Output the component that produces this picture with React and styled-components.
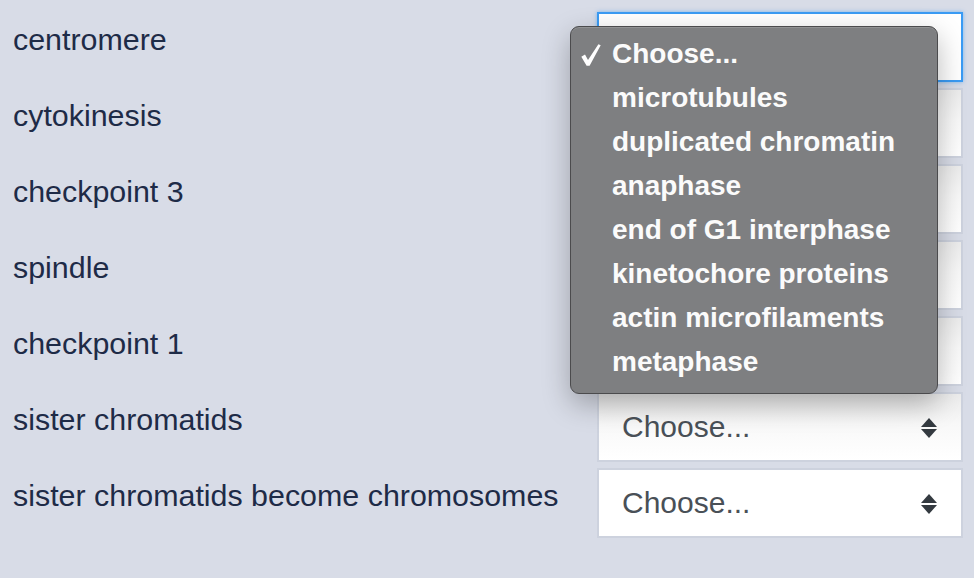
import React from 'react';
import styled, { createGlobalStyle } from 'styled-components';

const GlobalStyle = createGlobalStyle`
  html, body {
    margin: 0;
    padding: 0;
    background: #d8dce7;
  }
  body {
    font-family: 'Liberation Sans', Arial, Helvetica, sans-serif;
  }
`;

const Page = styled.div`
  width: 974px;
  height: 578px;
  overflow: hidden;
  box-sizing: border-box;
  padding: 12px 11px 0 13px;
  background: #d8dce7;
`;

const Row = styled.div`
  display: flex;
  justify-content: space-between;
  align-items: flex-start;
  height: 70px;
  margin-bottom: 6px;
`;

const Label = styled.div`
  padding-top: 10px;
  font-size: 30.4px;
  line-height: 34px;
  color: #1e2b47;
`;

const SelectWrap = styled.div`
  position: relative;
  width: 366px;
  height: 70px;
`;

const SelectBox = styled.div`
  box-sizing: border-box;
  width: 100%;
  height: 100%;
  display: flex;
  align-items: center;
  justify-content: space-between;
  padding: 0 24px 0 23px;
  background: ${(p) => (p.$shaded ? 'linear-gradient(#ececec, #f8f8f8 45%, #ffffff)' : '#ffffff')};
  border: 2px solid ${(p) => (p.$focused ? '#3a9bf4' : '#cdd2de')};
  box-shadow: ${(p) => (p.$focused ? '0 0 4px rgba(58, 155, 244, 0.6)' : 'none')};
  font-size: 30px;
  color: #495057;
`;

const Arrows = styled.svg`
  width: 16px;
  height: 20px;
  margin-top: 2px;
  flex-shrink: 0;
`;

const Popup = styled.div`
  position: absolute;
  left: -27px;
  top: 14px;
  width: 368px;
  box-sizing: border-box;
  padding: 5px 0 9px;
  background: #7e7f81;
  border: 1px solid #4b4b4d;
  border-radius: 9px;
  box-shadow: 0 10px 28px rgba(0, 0, 0, 0.28), inset 0 1px 0 rgba(255, 255, 255, 0.15);
  z-index: 5;
`;

const Item = styled.div`
  display: flex;
  align-items: center;
  height: 44px;
  font-size: 28px;
  font-weight: bold;
  color: #fbfbfb;
  white-space: nowrap;
`;

const CheckSlot = styled.span`
  display: flex;
  align-items: center;
  width: 41px;
  padding-left: 10px;
  box-sizing: border-box;
`;

const CheckIcon = styled.svg`
  width: 20px;
  height: 22px;
  margin-top: 1px;
`;

const labels = [
  'centromere',
  'cytokinesis',
  'checkpoint 3',
  'spindle',
  'checkpoint 1',
  'sister chromatids',
  'sister chromatids become chromosomes',
];

const options = [
  'Choose...',
  'microtubules',
  'duplicated chromatin',
  'anaphase',
  'end of G1 interphase',
  'kinetochore proteins',
  'actin microfilaments',
  'metaphase',
];

const ArrowIcon = () => (
  <Arrows viewBox="0 0 16 20">
    <path d="M8 0 L16 9 H0 Z" fill="#343a40" />
    <path d="M0 11 H16 L8 20 Z" fill="#343a40" />
  </Arrows>
);

const Check = () => (
  <CheckIcon viewBox="0 0 20 22">
    <path d="M0.3 12.8 L4 10.4 L7 16 L17.4 0.3 L19.7 1.3 L8.6 21.7 L5.6 21.7 Z" fill="#ffffff" />
  </CheckIcon>
);

const App = () => (
  <>
    <GlobalStyle />
    <Page>
      {labels.map((label, i) => (
        <Row key={label}>
          <Label>{label}</Label>
          <SelectWrap>
            <SelectBox $focused={i === 0} $shaded={i > 0 && i < 6}>
              {i >= 5 && (
                <>
                  <span>Choose...</span>
                  <ArrowIcon />
                </>
              )}
            </SelectBox>
            {i === 0 && (
              <Popup>
                {options.map((opt, j) => (
                  <Item key={opt}>
                    <CheckSlot>{j === 0 && <Check />}</CheckSlot>
                    {opt}
                  </Item>
                ))}
              </Popup>
            )}
          </SelectWrap>
        </Row>
      ))}
    </Page>
  </>
);

export default App;
